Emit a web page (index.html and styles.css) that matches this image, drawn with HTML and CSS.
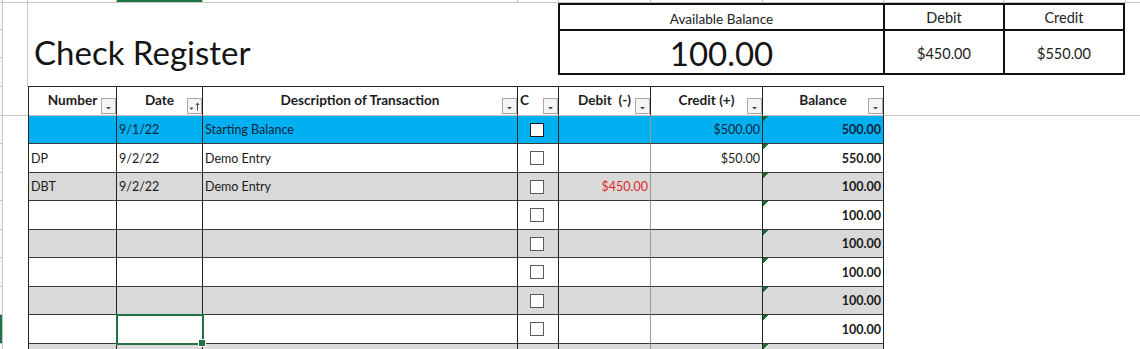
FILE: index.html
```html
<!DOCTYPE html>
<html lang="en">
<head>
<meta charset="utf-8">
<title>Check Register</title>
<link rel="stylesheet" href="styles.css">
</head>
<body>
<div class="sheet">
  <div class="gutter">
    <span class="g h3"></span>
    <span class="g h27"></span>
    <span class="g h28"></span>
    <span class="g h29"></span>
    <span class="g h29"></span>
    <span class="g h28"></span>
    <span class="g h29"></span>
    <span class="g h28"></span>
    <span class="g h29"></span>
    <span class="g h28"></span>
    <span class="g h29"></span>
    <span class="g h28"></span>
    <span class="g h29 sel"></span>
    <span class="g h29"></span>
  </div>
  <div class="main">
    <div class="strip">
      <span></span><span></span><span class="sel"></span><span></span><span></span><span></span><span></span><span></span><span></span><span></span><span class="last"></span>
    </div>
    <div class="upper">
      <div class="col-a"></div>
      <div class="title-area"><h1 class="title">Check Register</h1></div>
      <div class="summary">
        <div class="sum-label">Available Balance</div>
        <div class="sum-head">Debit</div>
        <div class="sum-head">Credit</div>
        <div class="sum-big">100.00</div>
        <div class="sum-val">$450.00</div>
        <div class="sum-val">$550.00</div>
      </div>
    </div>
    <div class="register-wrap">
      <div class="pad"><div class="pad-head"></div></div>
      <div class="register">
        <div class="row head">
          <div class="hc"><span class="hl">Number</span><svg class="fb" width="15" height="16" viewBox="0 0 15 16"><rect x="0.5" y="0.5" width="14" height="15" fill="#f5f5f5" stroke="#a8a8a8"/><polygon points="5,9 10,9 7.5,11.5" fill="#4a4a4a"/></svg></div>
          <div class="hc"><span class="hl">Date</span><svg class="fb" width="15" height="16" viewBox="0 0 15 16"><rect x="0.5" y="0.5" width="14" height="15" fill="#f5f5f5" stroke="#a8a8a8"/><polygon points="2.5,9.5 6.5,9.5 4.5,12" fill="#4a4a4a"/><path d="M10.5 12.5V5.5" stroke="#4a4a4a" stroke-width="1"/><polygon points="8.5,7 12.5,7 10.5,4.5" fill="#4a4a4a"/></svg></div>
          <div class="hc"><span class="hl">Description of Transaction</span><svg class="fb" width="15" height="16" viewBox="0 0 15 16"><rect x="0.5" y="0.5" width="14" height="15" fill="#f5f5f5" stroke="#a8a8a8"/><polygon points="5,9 10,9 7.5,11.5" fill="#4a4a4a"/></svg></div>
          <div class="hc"><span class="hl left">C</span><svg class="fb" width="15" height="16" viewBox="0 0 15 16"><rect x="0.5" y="0.5" width="14" height="15" fill="#f5f5f5" stroke="#a8a8a8"/><polygon points="5,9 10,9 7.5,11.5" fill="#4a4a4a"/></svg></div>
          <div class="hc"><span class="hl">Debit  (-)</span><svg class="fb" width="15" height="16" viewBox="0 0 15 16"><rect x="0.5" y="0.5" width="14" height="15" fill="#f5f5f5" stroke="#a8a8a8"/><polygon points="5,9 10,9 7.5,11.5" fill="#4a4a4a"/></svg></div>
          <div class="hc"><span class="hl">Credit (+)</span><svg class="fb" width="15" height="16" viewBox="0 0 15 16"><rect x="0.5" y="0.5" width="14" height="15" fill="#f5f5f5" stroke="#a8a8a8"/><polygon points="5,9 10,9 7.5,11.5" fill="#4a4a4a"/></svg></div>
          <div class="hc"><span class="hl">Balance</span><svg class="fb" width="15" height="16" viewBox="0 0 15 16"><rect x="0.5" y="0.5" width="14" height="15" fill="#f5f5f5" stroke="#a8a8a8"/><polygon points="5,9 10,9 7.5,11.5" fill="#4a4a4a"/></svg></div>
        </div>

        <div class="row blue">
          <div class="c"></div>
          <div class="c">9/1/22</div>
          <div class="c">Starting Balance</div>
          <div class="c chk"><span class="box strong"></span></div>
          <div class="c deb"></div>
          <div class="c r">$500.00</div>
          <div class="c r bal">500.00</div>
        </div>
        <div class="row white">
          <div class="c">DP</div>
          <div class="c">9/2/22</div>
          <div class="c">Demo Entry</div>
          <div class="c chk"><span class="box"></span></div>
          <div class="c deb"></div>
          <div class="c r">$50.00</div>
          <div class="c r bal">550.00</div>
        </div>
        <div class="row gray">
          <div class="c">DBT</div>
          <div class="c">9/2/22</div>
          <div class="c">Demo Entry</div>
          <div class="c chk"><span class="box"></span></div>
          <div class="c deb r red">$450.00</div>
          <div class="c r"></div>
          <div class="c r bal">100.00</div>
        </div>
        <div class="row white">
          <div class="c"></div><div class="c"></div><div class="c"></div>
          <div class="c chk"><span class="box"></span></div>
          <div class="c deb"></div><div class="c"></div>
          <div class="c r bal">100.00</div>
        </div>
        <div class="row gray">
          <div class="c"></div><div class="c"></div><div class="c"></div>
          <div class="c chk"><span class="box"></span></div>
          <div class="c deb"></div><div class="c"></div>
          <div class="c r bal">100.00</div>
        </div>
        <div class="row white">
          <div class="c"></div><div class="c"></div><div class="c"></div>
          <div class="c chk"><span class="box"></span></div>
          <div class="c deb"></div><div class="c"></div>
          <div class="c r bal">100.00</div>
        </div>
        <div class="row gray">
          <div class="c"></div><div class="c"></div><div class="c"></div>
          <div class="c chk"><span class="box"></span></div>
          <div class="c deb"></div><div class="c"></div>
          <div class="c r bal">100.00</div>
        </div>
        <div class="row white">
          <div class="c"></div><div class="c selected"></div><div class="c"></div>
          <div class="c chk"><span class="box"></span></div>
          <div class="c deb"></div><div class="c"></div>
          <div class="c r bal">100.00</div>
        </div>
        <div class="row gray">
          <div class="c"></div><div class="c"></div><div class="c"></div>
          <div class="c chk"></div>
          <div class="c deb"></div><div class="c"></div>
          <div class="c r bal"></div>
        </div>
      </div>
      <div class="pad grow"><div class="pad-head"></div></div>
    </div>
  </div>
</div>
</body>
</html>
```

FILE: styles.css
```css
* { box-sizing: border-box; margin: 0; padding: 0; }
html, body { width: 1140px; height: 349px; overflow: hidden; background: #fff; }
body { font-family: Lato, "Liberation Sans", sans-serif; color: #1a1a1a; }

.sheet { display: flex; width: 1140px; height: 349px; overflow: hidden; }

/* row header gutter */
.gutter { width: 3px; flex: none; display: flex; flex-direction: column; border-right: 1px solid #c6c6c6; background: #f7f7f7; }
.g { display: block; flex: none; border-bottom: 1px solid #c6c6c6; }
.h3 { height: 3px; }
.h27 { height: 27px; }
.h28 { height: 28px; }
.h29 { height: 29px; }
.g.sel { background: #217346; }

.main { flex: 1; display: flex; flex-direction: column; min-width: 0; }

/* partially visible row at the top */
.strip { display: grid; grid-template-columns: 25px 89px 86px 315px 41px 92px 112px 121px 120px 122px 1fr; height: 3px; border-bottom: 1px solid #c6c6c6; flex: none; }
.strip span { border-right: 1px solid #c6c6c6; }
.strip span.last { border-right: 0; }
.strip span.sel { background: #217346; }

/* title + summary */
.upper { display: flex; height: 83px; flex: none; }
.col-a { width: 25px; flex: none; border-right: 1px solid #c6c6c6; }
.title-area { width: 530px; flex: none; padding: 31px 0 0 6px; }
.title { font-weight: 400; font-size: 33px; line-height: 36px; color: #141414; }

.summary { display: grid; grid-template-columns: 325px 120px 118px; grid-template-rows: 26px 42px; border: 2px solid #111; align-self: flex-start; flex: none; }
.summary > div { display: flex; justify-content: center; align-items: center; }
.sum-label, .sum-head { border-bottom: 2px solid #111; }
.sum-label, .sum-big, .summary > .sum-head:nth-child(2), .summary > .sum-val:nth-child(5) { border-right: 2px solid #111; }
.summary > .sum-label { align-items: flex-end; padding-bottom: 2px; font-size: 13.6px; color: #222; }
.sum-head { font-size: 14.5px; color: #222; }
.summary > .sum-big { font-size: 33px; color: #141414; padding-top: 2px; }
.summary > .sum-val { font-size: 14.5px; color: #222; padding-top: 2px; }

/* register */
.register-wrap { display: flex; flex: 1; min-height: 0; }
.pad { width: 25px; flex: none; }
.pad.grow { flex: 1; width: auto; }
.pad-head { height: 30px; border-bottom: 1px solid #c6c6c6; }

.register { display: grid; width: 856px; flex: none; align-self: flex-start;
  grid-template-columns: 88px 86px 315px 41px 92px 112px 121px;
  grid-template-rows: 29px 28px 29px 28px 29px 28px 29px 28px 29px 29px;
  border-left: 1px solid #222; border-top: 1px solid #222; }
.row { display: contents; }

.hc { display: grid; border-right: 1px solid #222; border-bottom: 1px solid #bdbdbd; background: #fff; }
.hc > * { grid-area: 1 / 1; }
.hl { justify-self: center; align-self: center; font-weight: 700; font-size: 13.6px; white-space: pre; color: #1c1c1c; padding-bottom: 2px; }
.hl.left { justify-self: start; padding-left: 2px; }
.fb { justify-self: end; align-self: end; margin-bottom: 1px; display: block; }

.c { display: flex; align-items: center; padding: 0 2px; font-size: 12.5px; border-right: 1px solid #222; border-bottom: 1px solid #3a3a3a; white-space: nowrap; overflow: visible; }
.c.r { justify-content: flex-end; }
.c.deb { border-right-color: #9a9a9a; }
.c.chk { justify-content: center; padding: 0 3px 0 0; }
.c.red { color: #e0282b; }
.c.bal { font-weight: 700; padding-right: 2px;
  background-image: linear-gradient(135deg, #1d6b36 0, #1d6b36 3.6px, transparent 3.6px);
  background-size: 8px 8px; background-repeat: no-repeat; }

.row.blue > .c { background-color: #00b0f0; color: #10243e; }
.row.white > .c { background-color: #fff; }
.row.gray > .c { background-color: #d9d9d9; }

.box { display: block; width: 14px; height: 14px; border: 1px solid #5c5c5c; background: #fff; }
.box.strong { border-color: #1a1a1a; border-width: 1.5px; }

.c.selected { position: relative; z-index: 2; outline: 2px solid #217346; outline-offset: -1px; }
.c.selected::after { content: ""; position: absolute; right: -4px; bottom: -4px; width: 6px; height: 6px; background: #217346; border: 1px solid #fff; }
```
